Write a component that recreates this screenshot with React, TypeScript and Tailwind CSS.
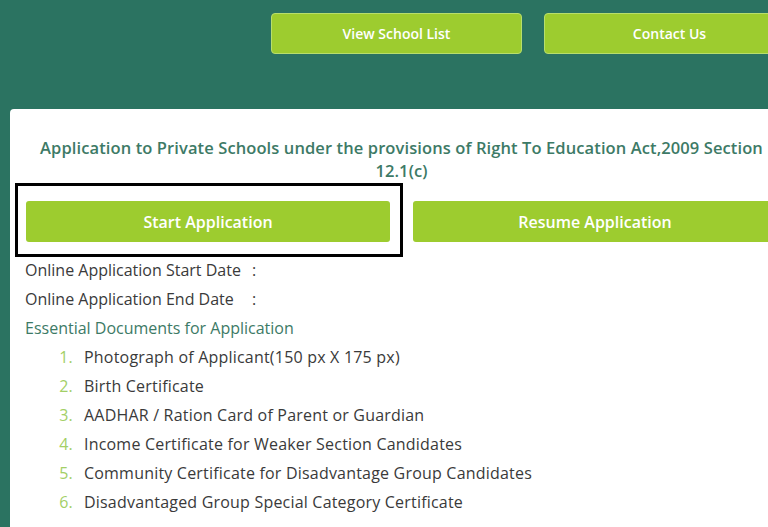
import React from "react";

const docs = [
  "Photograph of Applicant(150 px X 175 px)",
  "Birth Certificate",
  "AADHAR / Ration Card of Parent or Guardian",
  "Income Certificate for Weaker Section Candidates",
  "Community Certificate for Disadvantage Group Candidates",
  "Disadvantaged Group Special Category Certificate",
];

export default function App() {
  return (
    <div
      className="relative w-[768px] h-[527px] overflow-hidden bg-[#2b7361]"
      style={{ fontFamily: '"Open Sans", "Noto Sans", sans-serif' }}
    >
      <div className="flex gap-[22px] pl-[271px] pt-[13px]">
        <div className="w-[251px] h-[41px] shrink-0 rounded-[4px] border border-[#b8de6c] bg-[#9dcc2f] flex items-center justify-center text-white text-[14px] font-semibold">
          View School List
        </div>
        <div className="w-[251px] h-[41px] shrink-0 rounded-[4px] border border-[#b8de6c] bg-[#9dcc2f] flex items-center justify-center text-white text-[14px] font-semibold">
          Contact Us
        </div>
      </div>

      <div className="mt-[55px] ml-[10px] w-[790px] h-[420px] bg-white rounded-tl-[4px] pl-[16px]">
        <div className="w-[751px] pt-[27px]">
          <h1 className="text-center text-[16.5px] leading-[23px] font-semibold text-[#3d7a66] tracking-[0.1px]">
            Application to Private Schools under the provisions of Right To Education Act,2009 Section 12.1(c)
          </h1>
          <div className="grid grid-cols-2 gap-[23px] mt-[19px]">
            <div className="h-[41px] rounded-[3px] bg-[#9dcc2f] flex items-center justify-center text-white text-[16px] font-semibold">
              Start Application
            </div>
            <div className="h-[41px] rounded-[3px] bg-[#9dcc2f] flex items-center justify-center text-white text-[16px] font-semibold">
              Resume Application
            </div>
          </div>
          <div className="mt-[14px] text-[16px] leading-[29px] text-[#3a3a3a] -ml-[1px]">
            <div className="flex">
              <span className="w-[227px]">Online Application Start Date</span>
              <span>:</span>
            </div>
            <div className="flex">
              <span className="w-[227px]">Online Application End Date</span>
              <span>:</span>
            </div>
            <div className="text-[#3d7a66]">Essential Documents for Application</div>
            <div className="flex flex-col tracking-[0.2px]">
              {docs.map((d, i) => (
                <div key={i} className="flex">
                  <span className="w-[48px] text-right text-[#a3cf66]">{i + 1}.</span>
                  <span className="ml-[11px]">{d}</span>
                </div>
              ))}
            </div>
          </div>
        </div>
      </div>

      <div className="absolute left-[15px] top-[183px] w-[388px] h-[74px] border-[3px] border-black pointer-events-none" />
    </div>
  );
}
